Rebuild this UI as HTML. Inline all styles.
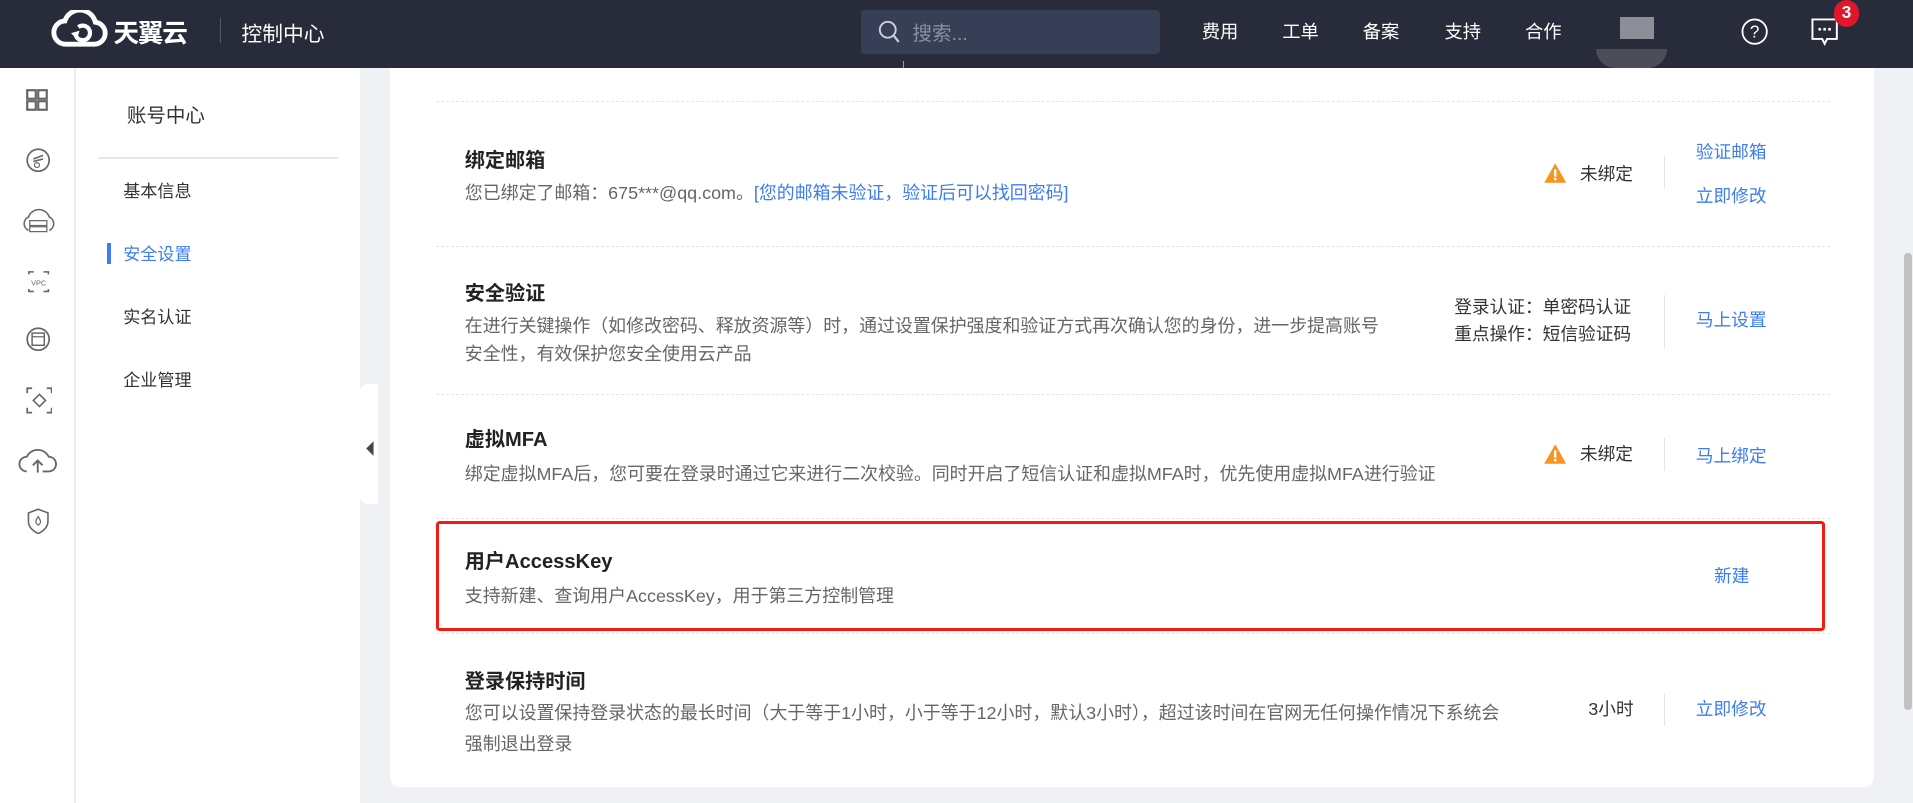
<!DOCTYPE html>
<html><head><meta charset="utf-8"><style>
html,body{margin:0;padding:0;overflow:hidden;background:#f0f1f5;}
body{width:1913px;height:803px;}
#z{zoom:1.22;width:1568px;height:658px;position:relative;font-family:"Liberation Sans","Noto Sans CJK SC",sans-serif;color:#333;}
.a{position:absolute;white-space:nowrap;}
.hdr{position:absolute;left:0;top:0;width:1568px;height:56px;background:#272b3a;}
.nav{color:#fff;font-size:15px;top:15px;}
.rail{position:absolute;left:0;top:56px;width:61px;height:602px;background:#fff;border-right:1px solid #e8e8ee;}
.side{position:absolute;left:62px;top:56px;width:233px;height:602px;background:#fff;}
.si{font-size:14px;color:#333;left:39px;}
.card{position:absolute;left:320px;top:56px;width:1216px;height:589px;background:#fff;border-radius:0 0 8px 8px;}
.dl{position:absolute;left:37px;width:1143px;border-top:1px dashed #e3e5ea;}
.t{font-size:16.5px;font-weight:bold;color:#222;left:61px;}
.d{font-size:14.7px;color:#666;left:61px;}
.lk{font-size:14.5px;color:#3d7cf2;}
.r{font-size:14.5px;color:#333;}
.vl{position:absolute;left:1044px;width:1px;height:27px;background:#e3e5ea;}
.ri{position:absolute;left:21px;}
</style></head><body><div id="z">
<div class="hdr">
 <svg class="a" style="left:40px;top:8px" width="50" height="32" viewBox="0 0 50 32"><path d="M14 28 H36 A9 9 0 0 0 38 10 A13 13 0 0 0 13 9 A9.5 9.5 0 0 0 14 28Z" fill="none" stroke="#fff" stroke-width="4"/><path d="M24 14 A6 6 0 1 1 22 21" fill="none" stroke="#fff" stroke-width="3.5"/><path d="M18 19 L23 24 L25 17Z" fill="#fff"/></svg>
 <div class="a" style="left:93px;top:11px;color:#fff;font-size:21px;font-weight:bold;letter-spacing:-1px">天翼云</div>
 <div class="a" style="left:180px;top:15px;width:1px;height:20px;background:#555a6a"></div>
 <div class="a" style="left:198px;top:14px;color:#fff;font-size:17px">控制中心</div>
 <div class="a" style="left:706px;top:8px;width:245px;height:36px;background:#363f56;border-radius:3px"></div>
 <svg class="a" style="left:720px;top:16px" width="20" height="22"><circle cx="8" cy="8" r="6.5" fill="none" stroke="#ccd" stroke-width="1.6"/><path d="M13 13 L17 18" stroke="#ccd" stroke-width="1.8"/></svg>
 <div class="a" style="left:748px;top:14px;color:#8a91a3;font-size:16px">搜索...</div>
 <div class="a nav" style="left:985px">费用</div>
 <div class="a nav" style="left:1051px">工单</div>
 <div class="a nav" style="left:1117px">备案</div>
 <div class="a nav" style="left:1184px">支持</div>
 <div class="a nav" style="left:1250px">合作</div>
 <div class="a" style="left:1328px;top:14px;width:28px;height:18px;background:#8c8f98"></div>
 <div class="a" style="left:1308px;top:40px;width:58px;height:16px;background:#4b4e58;border-radius:0 0 30px 30px"></div>
 <svg class="a" style="left:1426px;top:14px" width="24" height="24"><circle cx="12" cy="12" r="10" fill="none" stroke="#fff" stroke-width="1.5"/><text x="12" y="17" fill="#fff" font-size="14" text-anchor="middle" font-family="Liberation Sans">?</text></svg>
 <svg class="a" style="left:1484px;top:14px" width="24" height="26"><path d="M2 2 H22 V18 H14 L12 22 L10 18 H2Z" fill="none" stroke="#fff" stroke-width="1.6"/><circle cx="8" cy="10" r="1.2" fill="#fff"/><circle cx="12" cy="10" r="1.2" fill="#fff"/><circle cx="16" cy="10" r="1.2" fill="#fff"/></svg>
 <div class="a" style="left:1503px;top:0;width:21px;height:22px;background:#e0162b;border-radius:11px;color:#fff;font-size:14px;font-weight:bold;text-align:center;line-height:22px">3</div>
</div>
<div class="rail">
 <svg class="ri" style="top:17px" width="18" height="18"><rect x="1" y="1" width="7" height="7" fill="none" stroke="#666" stroke-width="1.8"/><rect x="10" y="1" width="7" height="7" fill="none" stroke="#666" stroke-width="1.8"/><rect x="1" y="10" width="7" height="7" fill="none" stroke="#666" stroke-width="1.8"/><rect x="10" y="10" width="7" height="7" fill="none" stroke="#666" stroke-width="1.8"/></svg>
 <svg class="ri" style="top:65px" width="20" height="20"><circle cx="10" cy="10" r="9" fill="none" stroke="#666" stroke-width="1.4"/><path d="M6 9 L14 6 M6 11 L14 9" stroke="#666" stroke-width="1.3"/><circle cx="9" cy="14" r="2" fill="none" stroke="#666"/></svg>
 <svg class="a" style="left:16px;top:113px" width="30" height="24"><path d="M7 20 A6 6 0 0 1 7 9 A9 9 0 0 1 24 9 A6 6 0 0 1 24 20" fill="none" stroke="#666" stroke-width="1.3"/><rect x="8" y="12" width="14" height="4" fill="none" stroke="#666"/><rect x="8" y="17" width="14" height="4" fill="none" stroke="#666"/></svg>
 <svg class="a" style="left:20px;top:163px" width="24" height="24"><path d="M4 6 V4 H8 M16 4 H20 V6 M4 18 V20 H8 M16 20 H20 V18" fill="none" stroke="#666" stroke-width="1.3"/><text x="12" y="15" font-size="6" fill="#666" text-anchor="middle" font-family="Liberation Sans">VPC</text></svg>
 <svg class="ri" style="top:212px" width="20" height="20"><circle cx="10" cy="10" r="9" fill="none" stroke="#666" stroke-width="1.4"/><rect x="5" y="5" width="10" height="10" fill="none" stroke="#666" stroke-width="1.2"/><path d="M5 8 H15" stroke="#666"/></svg>
 <svg class="ri" style="top:261px" width="22" height="22"><path d="M1 5 V1 H5 M17 1 H21 V5 M1 17 V21 H5 M17 21 H21 V17" fill="none" stroke="#666" stroke-width="1.4"/><path d="M11 6 L16 11 L11 16 L6 11Z" fill="none" stroke="#666" stroke-width="1.3"/></svg>
 <svg class="a" style="left:14px;top:310px" width="34" height="24"><path d="M8 20 A6 6 0 0 1 8 8 A10 10 0 0 1 26 8 A6 6 0 0 1 26 20 H21" fill="none" stroke="#666" stroke-width="1.5"/><path d="M17 21 V12 M13 15 L17 11 L21 15" fill="none" stroke="#666" stroke-width="1.5"/></svg>
 <svg class="ri" style="top:360px" width="20" height="22"><path d="M10 1 L18 4 V11 C18 16 14 19 10 21 C6 19 2 16 2 11 V4Z" fill="none" stroke="#666" stroke-width="1.3"/><path d="M10 7 C8 10 7 12 10 14 C13 12 12 10 10 7Z" fill="none" stroke="#666"/></svg>
</div>
<div class="side">
 <div class="a" style="left:42px;top:25px;font-size:16px;color:#333">账号中心</div>
 <div class="a" style="left:18px;top:73px;width:197px;height:1px;background:#e5e6eb"></div>
 <div class="a si" style="top:89px">基本信息</div>
 <div class="a" style="left:26px;top:143px;width:3px;height:17px"><div style="width:3px;height:17px;background:#3d7cf2"></div></div>
 <div class="a si" style="top:141px;color:#3d7cf2">安全设置</div>
 <div class="a si" style="top:192px">实名认证</div>
 <div class="a si" style="top:244px">企业管理</div>
</div>
<div class="a" style="left:294px;top:315px;width:16px;height:98px;background:#fff;border-radius:8px 0 0 8px"></div>
<svg class="a" style="left:299px;top:361px" width="8" height="14"><path d="M7 1 L1 7 L7 13Z" fill="#444"/></svg>
<div class="card">
 <div class="a" style="left:420px;top:-6px;width:1px;height:6px;background:#999"></div>
 <div class="dl" style="top:27px"></div>
 <div class="a t" style="top:62px">绑定邮箱</div>
 <div class="a d" style="top:91px">您已绑定了邮箱：675***@qq.com。<span style="color:#3d7cf2">[您的邮箱未验证，验证后可以找回密码]</span></div>
 <svg class="a" style="left:945px;top:77px" width="20" height="18"><path d="M10 1 L19 17 H1Z" fill="#f7941d"/><rect x="9" y="6" width="2" height="6" fill="#fff"/><rect x="9" y="13" width="2" height="2" fill="#fff"/></svg>
 <div class="a r" style="left:975px;top:75px">未绑定</div>
 <div class="vl" style="top:72px"></div>
 <div class="a lk" style="left:1070px;top:57px">验证邮箱</div>
 <div class="a lk" style="left:1070px;top:93px">立即修改</div>
 <div class="dl" style="top:146px"></div>
 <div class="a t" style="top:171px">安全验证</div>
 <div class="a d" style="top:200px">在进行关键操作（如修改密码、释放资源等）时，通过设置保护强度和验证方式再次确认您的身份，进一步提高账号</div>
 <div class="a d" style="top:223px">安全性，有效保护您安全使用云产品</div>
 <div class="a r" style="left:872px;top:184px">登录认证：单密码认证</div>
 <div class="a r" style="left:872px;top:206px">重点操作：短信验证码</div>
 <div class="vl" style="top:186px;height:44px"></div>
 <div class="a lk" style="left:1070px;top:195px">马上设置</div>
 <div class="dl" style="top:267px"></div>
 <div class="a t" style="top:291px">虚拟MFA</div>
 <div class="a d" style="top:321px">绑定虚拟MFA后，您可要在登录时通过它来进行二次校验。同时开启了短信认证和虚拟MFA时，优先使用虚拟MFA进行验证</div>
 <svg class="a" style="left:945px;top:307px" width="20" height="18"><path d="M10 1 L19 17 H1Z" fill="#f7941d"/><rect x="9" y="6" width="2" height="6" fill="#fff"/><rect x="9" y="13" width="2" height="2" fill="#fff"/></svg>
 <div class="a r" style="left:975px;top:305px">未绑定</div>
 <div class="vl" style="top:303px"></div>
 <div class="a lk" style="left:1070px;top:306px">马上绑定</div>
 <div class="dl" style="top:369px"></div>
 <div class="a" style="left:37px;top:371px;width:1134px;height:85px;border:3px solid #f01c14;border-radius:3px"></div>
 <div class="a t" style="top:391px">用户AccessKey</div>
 <div class="a d" style="top:421px">支持新建、查询用户AccessKey，用于第三方控制管理</div>
 <div class="a lk" style="left:1085px;top:405px">新建</div>
 <div class="dl" style="top:463px"></div>
 <div class="a t" style="top:489px">登录保持时间</div>
 <div class="a d" style="top:517px">您可以设置保持登录状态的最长时间（大于等于1小时，小于等于12小时，默认3小时），超过该时间在官网无任何操作情况下系统会</div>
 <div class="a d" style="top:542px">强制退出登录</div>
 <div class="a r" style="left:982px;top:514px">3小时</div>
 <div class="vl" style="top:512px"></div>
 <div class="a lk" style="left:1070px;top:514px">立即修改</div>
</div>
<div class="a" style="left:1560px;top:56px;width:8px;height:602px;background:#f0f1f5"></div>
<div class="a" style="left:1561px;top:207px;width:6px;height:375px;background:#c1c1c1;border-radius:3px"></div>
</div></body></html>
